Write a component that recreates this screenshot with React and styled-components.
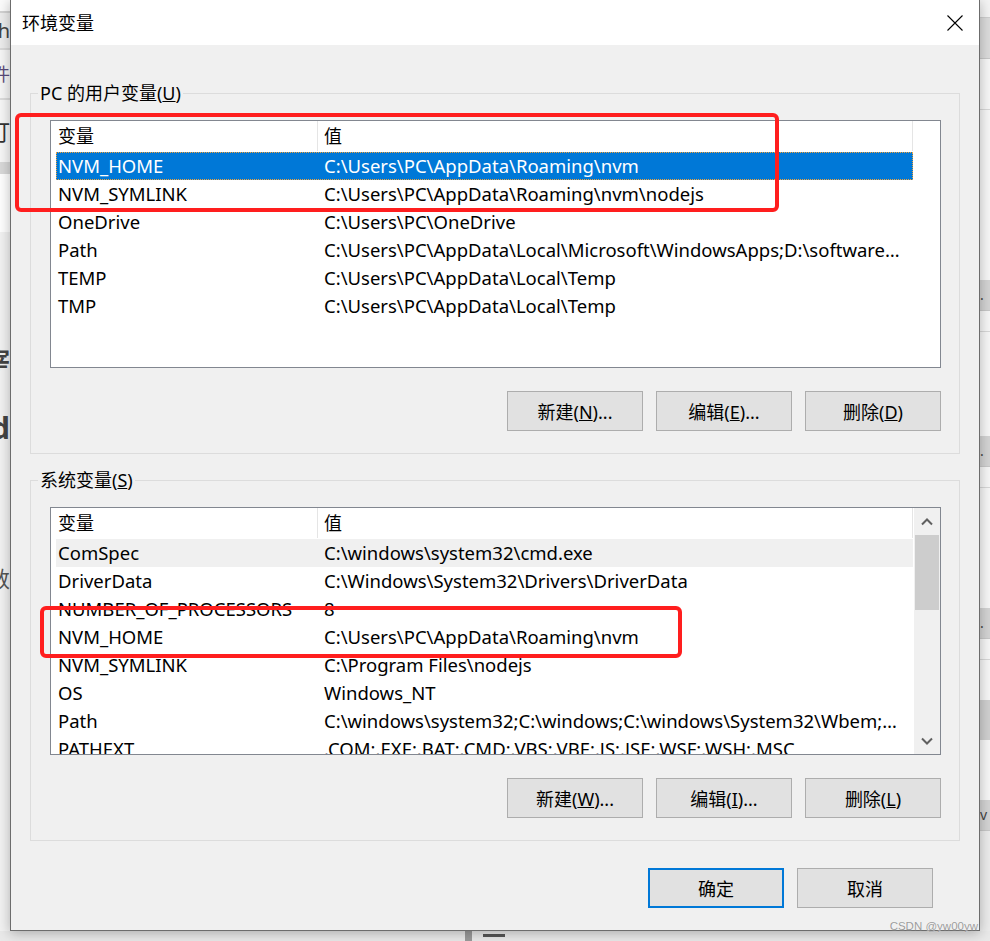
import React from "react";
import styled, { createGlobalStyle } from "styled-components";

const GlobalStyle = createGlobalStyle`
  html, body {
    margin: 0;
    padding: 0;
  }
  body {
    width: 990px;
    height: 941px;
    overflow: hidden;
    background: #e6e6e6;
    font-family: "Noto Sans", "Noto Sans CJK SC", sans-serif;
    color: #000;
  }
`;

const userVars = [
  { name: "NVM_HOME", value: "C:\\Users\\PC\\AppData\\Roaming\\nvm", state: "active" },
  { name: "NVM_SYMLINK", value: "C:\\Users\\PC\\AppData\\Roaming\\nvm\\nodejs" },
  { name: "OneDrive", value: "C:\\Users\\PC\\OneDrive" },
  { name: "Path", value: "C:\\Users\\PC\\AppData\\Local\\Microsoft\\WindowsApps;D:\\software\\Microsoft VS Code\\bin" },
  { name: "TEMP", value: "C:\\Users\\PC\\AppData\\Local\\Temp" },
  { name: "TMP", value: "C:\\Users\\PC\\AppData\\Local\\Temp" },
];

const systemVars = [
  { name: "ComSpec", value: "C:\\windows\\system32\\cmd.exe", state: "inactive" },
  { name: "DriverData", value: "C:\\Windows\\System32\\Drivers\\DriverData" },
  { name: "NUMBER_OF_PROCESSORS", value: "8" },
  { name: "NVM_HOME", value: "C:\\Users\\PC\\AppData\\Roaming\\nvm" },
  { name: "NVM_SYMLINK", value: "C:\\Program Files\\nodejs" },
  { name: "OS", value: "Windows_NT" },
  { name: "Path", value: "C:\\windows\\system32;C:\\windows;C:\\windows\\System32\\Wbem;C:\\windows\\System32\\WindowsPowerShell\\v1.0\\" },
  { name: "PATHEXT", value: ".COM;.EXE;.BAT;.CMD;.VBS;.VBE;.JS;.JSE;.WSF;.WSH;.MSC" },
];

// background window strips (what peeks out around the dialog)
const leftBands = [
  { h: 11, bg: "#fbfbfb" },
  { h: 2, bg: "#d2d2d2" },
  { h: 35, bg: "#ededed", text: "ch", size: 20 },
  { h: 2, bg: "#dadada" },
  { h: 48, bg: "#f6f6f6", text: "件", size: 18, color: "#5a4a7a" },
  { h: 2, bg: "#dcdcdc" },
  { h: 62, bg: "#f7f7f7", text: "打", size: 22, color: "#333" },
  { h: 12, bg: "#d9d9d9" },
  { h: 58, bg: "#ffffff" },
  { h: 100, bg: "#f2f2f2" },
  { h: 56, bg: "#f2f2f2", text: "宰", size: 24, color: "#444", weight: 700 },
  { h: 80, bg: "#f2f2f2", text: "d", size: 30, color: "#444", weight: 700 },
  { h: 80, bg: "#f2f2f2" },
  { h: 60, bg: "#f2f2f2", text: "数", size: 22, color: "#555" },
  { h: 333, bg: "#f2f2f2" },
];

const rightBands = [
  { h: 17, bg: "#f4f4f4" },
  { h: 1, bg: "#cfcfcf" },
  { h: 40, bg: "#dcdcdc" },
  { h: 1, bg: "#c8c8c8" },
  { h: 50, bg: "#f7f7f7" },
  { h: 1, bg: "#d8d8d8" },
  { h: 170, bg: "#f7f7f7" },
  { h: 30, bg: "#d4d4d4", text: "." },
  { h: 1, bg: "#c8c8c8" },
  { h: 20, bg: "#f7f7f7" },
  { h: 1, bg: "#d8d8d8" },
  { h: 104, bg: "#f7f7f7" },
  { h: 30, bg: "#d4d4d4", text: "." },
  { h: 1, bg: "#c8c8c8" },
  { h: 20, bg: "#f7f7f7" },
  { h: 1, bg: "#d8d8d8" },
  { h: 120, bg: "#f7f7f7" },
  { h: 30, bg: "#d4d4d4", text: "." },
  { h: 1, bg: "#c8c8c8" },
  { h: 20, bg: "#f7f7f7" },
  { h: 1, bg: "#d8d8d8" },
  { h: 40, bg: "#f7f7f7" },
  { h: 40, bg: "#d0d0d0" },
  { h: 60, bg: "#f7f7f7" },
  { h: 30, bg: "#d4d4d4", text: "v" },
  { h: 1, bg: "#c8c8c8" },
  { h: 110, bg: "#ececec" },
];

const Screen = styled.div`
  position: relative;
  display: grid;
  grid-template-columns: 10px 970px 10px;
  grid-template-rows: 931px 10px;
  grid-template-areas:
    "left dialog right"
    "bottom bottom bottom";
  width: 990px;
  height: 941px;
  overflow: hidden;
`;

const Strip = styled.div`
  grid-area: ${(p) => p.$area};
  display: flex;
  flex-direction: column;
  overflow: hidden;
`;

const Band = styled.div`
  flex: 0 0 auto;
  display: flex;
  align-items: center;
  justify-content: ${(p) => (p.$side === "left" ? "flex-end" : "flex-start")};
  overflow: hidden;
  white-space: nowrap;
  font-family: "Noto Sans", "Noto Sans CJK SC", sans-serif;
  line-height: 1;
`;

const BottomStrip = styled.div`
  grid-area: bottom;
  display: flex;
  align-items: flex-start;
  background: #e9e9e9;
  padding-left: 465px;
  gap: 11px;
`;

const BgBar = styled.div`
  width: 7px;
  height: 10px;
  background: #9a9a9a;
`;

const BgMenuIcon = styled.div`
  width: 22px;
  height: 10px;
  margin-top: 3px;
  border-top: 3px solid #555;
  border-bottom: 3px solid #555;
  box-sizing: border-box;
`;

const Dialog = styled.section`
  grid-area: dialog;
  position: relative;
  z-index: 1;
  display: flex;
  flex-direction: column;
  box-sizing: border-box;
  border: 1px solid #6c6c6c;
  border-top: none;
  background: #f0f0f0;
  box-shadow: 0 2px 12px rgba(0, 0, 0, 0.28);
`;

const TitleBar = styled.header`
  flex: 0 0 45px;
  display: flex;
  align-items: center;
  justify-content: space-between;
  padding: 0 16px 0 11px;
  background: #fff;
`;

const Title = styled.h1`
  margin: 0;
  font-size: 18px;
  font-weight: 400;
  line-height: 24px;
`;

const CloseButton = styled.button`
  display: flex;
  padding: 0;
  border: none;
  background: transparent;
`;

const Body = styled.div`
  flex: 1;
  display: flex;
  flex-direction: column;
  padding: 36px 19px 0;
`;

const Group = styled.fieldset`
  margin: ${(p) => (p.$first ? "0" : "14px 0 0")};
  padding: 15px 18px 22px 19px;
  border: 1px solid #dcdcdc;
  min-width: 0;
`;

const Legend = styled.legend`
  margin-left: -12px;
  padding: 0 2px;
  font-size: 18px;
  line-height: 24px;
`;

const ListBox = styled.div`
  display: flex;
  height: 248px;
  box-sizing: border-box;
  border: 1px solid #828790;
  background: #fff;
  overflow: hidden;
`;

const ListMain = styled.div`
  flex: 0 0 862px;
  display: flex;
  flex-direction: column;
`;

const HeaderRow = styled.div`
  display: grid;
  grid-template-columns: 267px 595px;
  flex: 0 0 30px;
  margin-bottom: 1px;
`;

const HeaderCell = styled.div`
  box-sizing: border-box;
  padding-left: ${(p) => p.$pad}px;
  border-right: 1px solid #e5e5e5;
  font-size: 18px;
  line-height: 30px;
`;

const Row = styled.div`
  flex: 0 0 28px;
  display: grid;
  grid-template-columns: 262px 595px;
  margin-left: 5px;
  box-sizing: border-box;
  font-size: 18.5px;
  line-height: 28px;
  background: ${(p) =>
    p.$state === "active" ? "#0078d7" : p.$state === "inactive" ? "#f0f0f0" : "transparent"};
  color: ${(p) => (p.$state === "active" ? "#fff" : "#000")};
  outline: ${(p) => (p.$state === "active" ? "1px dotted #f2a33a" : "none")};
  outline-offset: -1px;
`;

const Cell = styled.div`
  padding-left: ${(p) => p.$pad}px;
  padding-right: 10px;
  white-space: nowrap;
  overflow: hidden;
  text-overflow: ellipsis;
`;

const ScrollBar = styled.div`
  flex: 0 0 26px;
  display: flex;
  flex-direction: column;
  margin-left: 1px;
  background: #f0f0f0;
`;

const ScrollArrow = styled.div`
  flex: 0 0 27px;
  display: flex;
  align-items: center;
  justify-content: center;
`;

const ScrollThumb = styled.div`
  flex: 0 0 75px;
  margin: 0 1px;
  background: #cdcdcd;
`;

const ScrollTrack = styled.div`
  flex: 1;
`;

const ButtonRow = styled.div`
  display: flex;
  justify-content: flex-end;
  gap: 13px;
  margin-top: 23px;
`;

const Button = styled.button`
  width: 136px;
  height: 40px;
  box-sizing: border-box;
  padding: 0;
  border: ${(p) => (p.$default ? "2px solid #0078d7" : "1px solid #adadad")};
  background: #e1e1e1;
  font-family: "Noto Sans", "Noto Sans CJK SC", sans-serif;
  font-size: 18px;
  color: #000;
`;

const Footer = styled.div`
  display: flex;
  justify-content: flex-end;
  gap: 13px;
  margin-top: 27px;
  padding-right: 27px;
`;

const Mark = styled.div`
  position: absolute;
  right: 12px;
  bottom: 9px;
  z-index: 3;
  font-family: "Liberation Sans", sans-serif;
  font-size: 11.5px;
  color: #9c9c9c;
  text-shadow: 0 0 1px #fff;
`;

const Annotation = styled.div`
  position: absolute;
  z-index: 2;
  box-sizing: border-box;
  border: 4px solid #ff1e1e;
  border-radius: 6px;
  pointer-events: none;
`;

const Chevron = ({ down }) => (
  <svg width="12" height="8" viewBox="0 0 12 8">
    <path
      d={down ? "M1 1.5 L6 6.5 L11 1.5" : "M1 6.5 L6 1.5 L11 6.5"}
      fill="none"
      stroke="#606060"
      strokeWidth="2"
    />
  </svg>
);

const VarList = ({ rows, scroll }) => (
  <ListBox>
    <ListMain>
      <HeaderRow>
        <HeaderCell $pad={7}>变量</HeaderCell>
        <HeaderCell $pad={6}>值</HeaderCell>
      </HeaderRow>
      {rows.map((r) => (
        <Row key={r.name} $state={r.state}>
          <Cell $pad={2}>{r.name}</Cell>
          <Cell $pad={6}>{r.value}</Cell>
        </Row>
      ))}
    </ListMain>
    {scroll && (
      <ScrollBar>
        <ScrollArrow>
          <Chevron />
        </ScrollArrow>
        <ScrollThumb />
        <ScrollTrack />
        <ScrollArrow>
          <Chevron down />
        </ScrollArrow>
      </ScrollBar>
    )}
  </ListBox>
);

const Actions = ({ keys }) => (
  <ButtonRow>
    <Button>
      新建(<u>{keys[0]}</u>)...
    </Button>
    <Button>
      编辑(<u>{keys[1]}</u>)...
    </Button>
    <Button>
      删除(<u>{keys[2]}</u>)
    </Button>
  </ButtonRow>
);

const renderBands = (bands, side) =>
  bands.map((b, i) => (
    <Band
      key={i}
      $side={side}
      style={{
        height: b.h,
        background: b.bg,
        fontSize: b.size || 14,
        color: b.color || "#444",
        fontWeight: b.weight || 400,
      }}
    >
      {b.text}
    </Band>
  ));

export default function App() {
  return (
    <>
      <GlobalStyle />
      <Screen>
        <Strip $area="left">{renderBands(leftBands, "left")}</Strip>
        <Dialog>
          <TitleBar>
            <Title>环境变量</Title>
            <CloseButton aria-label="关闭">
              <svg width="16" height="16" viewBox="0 0 16 16">
                <path d="M0.5 0.5 L15.5 15.5 M15.5 0.5 L0.5 15.5" stroke="#000" strokeWidth="1.1" />
              </svg>
            </CloseButton>
          </TitleBar>
          <Body>
            <Group $first>
              <Legend>
                PC 的用户变量(<u>U</u>)
              </Legend>
              <VarList rows={userVars} />
              <Actions keys={["N", "E", "D"]} />
            </Group>
            <Group>
              <Legend>
                系统变量(<u>S</u>)
              </Legend>
              <VarList rows={systemVars} scroll />
              <Actions keys={["W", "I", "L"]} />
            </Group>
            <Footer>
              <Button $default>确定</Button>
              <Button>取消</Button>
            </Footer>
          </Body>
        </Dialog>
        <Strip $area="right">{renderBands(rightBands, "right")}</Strip>
        <BottomStrip>
          <BgBar />
          <BgMenuIcon />
        </BottomStrip>
        <Annotation style={{ left: 15, top: 113, width: 764, height: 99 }} />
        <Annotation style={{ left: 40, top: 606, width: 642, height: 52 }} />
        <Mark>CSDN @yw00yw</Mark>
      </Screen>
    </>
  );
}
